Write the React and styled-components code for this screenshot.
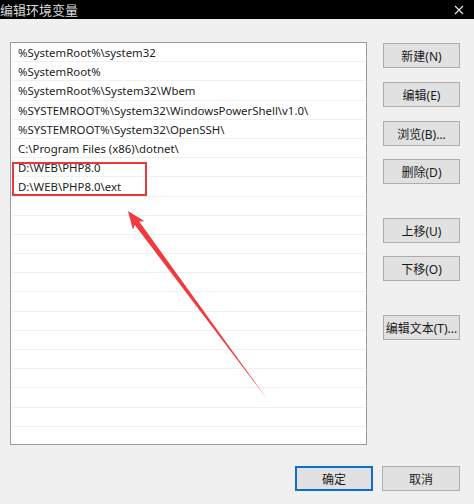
import React from "react";
import styled, { createGlobalStyle } from "styled-components";

const Global = createGlobalStyle`
  html, body { margin: 0; padding: 0; background: #f0f0f0; }
  body { font-family: "Noto Sans", "Noto Sans CJK SC", sans-serif; }
`;

const Window = styled.div`
  width: 474px;
  height: 504px;
  background: #f0f0f0;
  display: flex;
  flex-direction: column;
  overflow: hidden;
  position: relative;
`;

const TitleBar = styled.div`
  height: 19px;
  background: #000;
  display: flex;
  align-items: center;
  justify-content: space-between;
  padding: 0 10px 0 0;
  color: #d8d8d8;
  font-size: 13px;
  font-family: "Noto Sans CJK SC", sans-serif;
`;

const TitleText = styled.span`
  margin-left: 0;
  line-height: 19px;
`;

const Body = styled.div`
  flex: 1;
  display: flex;
  flex-direction: column;
  padding: 23px 14px 0 10px;
`;

const Main = styled.div`
  display: flex;
  gap: 16px;
`;

const ListBox = styled.div`
  position: relative;
  width: 357px;
  height: 403px;
  box-sizing: border-box;
  border: 1px solid #9a9a9a;
  background: #fff;
  overflow: hidden;
`;

const Row = styled.div`
  height: 19.2px;
  box-sizing: border-box;
  border-bottom: 1px solid #f0f0f0;
  padding-left: 7px;
  font-size: 11.4px;
  line-height: 19px;
  color: #1c1c1c;
  white-space: nowrap;
`;

const Side = styled.div`
  display: flex;
  flex-direction: column;
  padding-top: 1px;
`;

const Button = styled.div`
  width: ${(p) => p.$w || 77}px;
  height: 25px;
  box-sizing: border-box;
  margin-top: ${(p) => p.$mt || 0}px;
  background: #e1e1e1;
  border: ${(p) => (p.$default ? "2px solid #0a6fd0" : "1px solid #adadad")};
  display: flex;
  align-items: center;
  justify-content: center;
  font-size: 12px;
  color: #1a1a1a;
  font-family: "Noto Sans", "Noto Sans CJK SC", sans-serif;
`;

const Footer = styled.div`
  display: flex;
  justify-content: flex-end;
  gap: 9px;
  margin-top: 21px;
`;

const Highlight = styled.div`
  position: absolute;
  left: 1px;
  top: 119px;
  width: 135px;
  height: 34px;
  box-sizing: border-box;
  border: 2px solid #e8383d;
`;

const ArrowSvg = styled.svg`
  position: absolute;
  left: 0;
  top: 0;
  pointer-events: none;
`;

const CloseIcon = () => (
  <svg width="10" height="10" viewBox="0 0 10 10">
    <path d="M1 1L9 9M9 1L1 9" stroke="#e6e6e6" strokeWidth="1.2" />
  </svg>
);

const entries = [
  "%SystemRoot%\\system32",
  "%SystemRoot%",
  "%SystemRoot%\\System32\\Wbem",
  "%SYSTEMROOT%\\System32\\WindowsPowerShell\\v1.0\\",
  "%SYSTEMROOT%\\System32\\OpenSSH\\",
  "C:\\Program Files (x86)\\dotnet\\",
  "D:\\WEB\\PHP8.0",
  "D:\\WEB\\PHP8.0\\ext",
];

export default function App() {
  const rows = [...entries];
  while (rows.length < 21) rows.push("");
  return (
    <Window>
      <Global />
      <TitleBar>
        <TitleText>编辑环境变量</TitleText>
        <CloseIcon />
      </TitleBar>
      <Body>
        <Main>
          <ListBox>
            {rows.map((r, i) => (
              <Row key={i}>{r}</Row>
            ))}
            <Highlight />
            <ArrowSvg width="357" height="403" viewBox="0 0 357 403">
              <path
                d="M117 168 L133.5 178.2 L128.2 178.4 L256 356 L123.6 181.8 L122 187 Z"
                fill="#f03a3e"
              />
            </ArrowSvg>
          </ListBox>
          <Side>
            <Button>新建(N)</Button>
            <Button $mt={14}>编辑(E)</Button>
            <Button $mt={14}>浏览(B)...</Button>
            <Button $mt={13}>删除(D)</Button>
            <Button $mt={34}>上移(U)</Button>
            <Button $mt={13}>下移(O)</Button>
            <Button $mt={34}>编辑文本(T)...</Button>
          </Side>
        </Main>
        <Footer>
          <Button $w={78} $default>确定</Button>
          <Button $w={78}>取消</Button>
        </Footer>
      </Body>
    </Window>
  );
}
